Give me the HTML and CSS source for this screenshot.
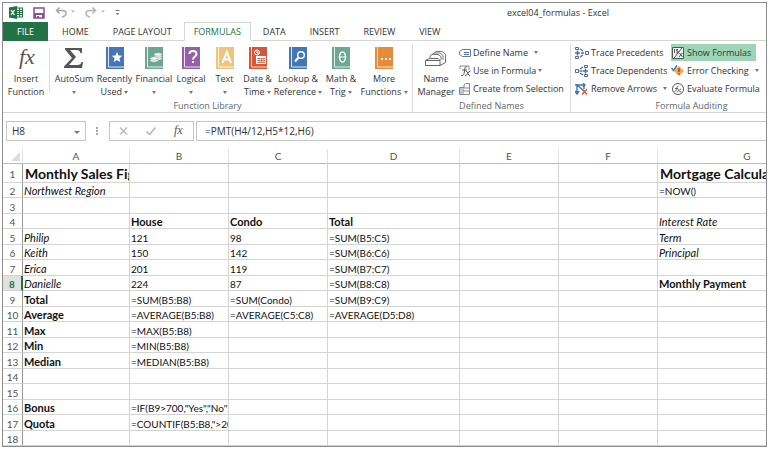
FILE: index.html
```html
<!DOCTYPE html>
<html lang="en">
<head>
    <meta charset="UTF-8">
    <meta name="viewport" content="width=device-width, initial-scale=1.0">
    <title>excel04_formulas - Excel</title>
    <link rel="stylesheet" href="styles.css">
</head>
<body>
<div class="window">

    <!-- Title bar -->
    <header class="titlebar">
        <div class="quick">
            <svg class="logo" width="14" height="13" viewBox="0 0 14 13">
                <rect x="7" y="2" width="6.500" height="9" fill="#fff" stroke="#217346"/>
                <path d="M8 4.500h5M8 6.500h5M8 8.500h5M10.500 2v9" stroke="#217346"/>
                <path d="M0 1.500L8 0v13L0 11.500z" fill="#217346"/>
                <path d="M2 4l3.500 5M5.500 4L2 9" stroke="#fff" stroke-width="1.300"/>
            </svg>
            <button class="qbtn" aria-label="Save">
                <svg width="12" height="12" viewBox="0 0 12 12">
                    <path d="M1 1h10v10H1z" fill="#fff" stroke="#80539c" stroke-width="1.500"/>
                    <path d="M1 6h10v5H9V8H3v3H1z" fill="#80539c"/>
                    <rect x="4" y="9" width="2" height="2" fill="#80539c"/>
                </svg>
            </button>
            <button class="qbtn" aria-label="Undo">
                <svg width="20" height="11" viewBox="0 0 20 11" fill="none" stroke="#a6a6a6">
                    <path d="M4.500 0.500L1.500 3.500L4.500 6.500M1.500 3.500H7C10 3.500 11 5 11 6.500S9 9.500 7 10" stroke-width="1.500"/>
                    <path d="M16 3.500h4l-2 2z" fill="#b0b0b0" stroke="none"/>
                </svg>
            </button>
            <button class="qbtn" aria-label="Redo">
                <svg width="20" height="11" viewBox="0 0 20 11" fill="none" stroke="#b4b4b4">
                    <path d="M7.500 0.500L10.500 3.500L7.500 6.500M10.500 3.500H5C2 3.500 1 5 1 6.500S3 9.500 5 10" stroke-width="1.500"/>
                    <path d="M16 3.500h4l-2 2z" fill="#b0b0b0" stroke="none"/>
                </svg>
            </button>
            <button class="qbtn" aria-label="Customize Quick Access Toolbar">
                <svg width="5" height="6" viewBox="0 0 5 6" fill="#777"><path d="M0.500 0h4v1h-4zM0.500 3h4l-2 2z"/></svg>
            </button>
        </div>
        <h1 class="title">excel04_formulas - Excel</h1>
    </header>

    <!-- Tabs -->
    <nav class="tabs">
        <button class="tab file">FILE</button>
        <button class="tab">HOME</button>
        <button class="tab">PAGE LAYOUT</button>
        <button class="tab active">FORMULAS</button>
        <button class="tab">DATA</button>
        <button class="tab">INSERT</button>
        <button class="tab">REVIEW</button>
        <button class="tab">VIEW</button>
    </nav>

    <!-- Ribbon -->
    <div class="ribbon">
        <section class="group library">
            <div class="tools">
                <button class="big insert">
                    <svg class="fx" width="22" height="22" viewBox="0 0 22 22"><text x="4" y="17" font-size="22">fx</text></svg>
                    <span>Insert<br>Function</span>
                </button>
                <span class="line"></span>
                <button class="big autosum">
                    <svg width="22" height="22" viewBox="0 0 22 22"><path d="M2 1h17v5h-1.500C17 4 16 3 14 3H7l6 7-7 8h8c3 0 4-1 4.500-3H20l-1 6H1v-1.500L9 11 2 2.500z" fill="#555"/></svg>
                    <span>AutoSum<br><i class="arrow"></i></span>
                </button>
                <button class="big recent">
                    <svg width="18" height="22" viewBox="0 0 18 22"><path d="M0 0h18v22H0z" fill="#4577b6"/><path d="M2.500 0v20H18" stroke="#dfe8f3" fill="none"/><path d="M11 5l1.500 3.500 3.800.3-2.900 2.500.9 3.700-3.300-2-3.300 2 .9-3.700-2.900-2.500 3.800-.3z" fill="#fff"/></svg>
                    <span>Recently<br>Used <i class="arrow"></i></span>
                </button>
                <button class="big financial">
                    <svg width="18" height="22" viewBox="0 0 18 22"><path d="M0 0h18v22H0z" fill="#6fa593"/><path d="M2.500 0v20H18" stroke="#e3efeb" fill="none"/><g fill="#fff" stroke="#6fa593" stroke-width=".6"><ellipse cx="13" cy="11.500" rx="3.800" ry="1.700"/><ellipse cx="13" cy="9.500" rx="3.800" ry="1.700"/><ellipse cx="13" cy="7.500" rx="3.800" ry="1.700"/><ellipse cx="9" cy="13.500" rx="3.800" ry="1.700"/><ellipse cx="9" cy="11.500" rx="3.800" ry="1.700"/></g></svg>
                    <span>Financial<br><i class="arrow"></i></span>
                </button>
                <button class="big logical">
                    <svg width="18" height="22" viewBox="0 0 18 22"><path d="M0 0h18v22H0z" fill="#9560a8"/><path d="M2.500 0v20H18" stroke="#eadff0" fill="none"/><path d="M7.500 7c0-4 7-4 7 0 0 2.500-3.500 2.500-3.500 5.500" stroke="#fff" stroke-width="2" fill="none"/><path d="M10 14h2v2h-2z" fill="#fff"/></svg>
                    <span>Logical<br><i class="arrow"></i></span>
                </button>
                <button class="big text">
                    <svg width="18" height="22" viewBox="0 0 18 22"><path d="M0 0h18v22H0z" fill="#eec57a"/><path d="M2.500 0v20H18" stroke="#fbf1df" fill="none"/><path d="M6.500 16L10.800 5 15 16M8 12.500h6" stroke="#fff" stroke-width="2" fill="none"/></svg>
                    <span>Text<br><i class="arrow"></i></span>
                </button>
                <button class="big date">
                    <svg width="18" height="22" viewBox="0 0 18 22"><path d="M0 0h18v22H0z" fill="#d4573a"/><path d="M2.500 0v20H18" stroke="#f6dcd5" fill="none"/><circle cx="8" cy="5.500" r="2.500" fill="none" stroke="#fff"/><path d="M8 4v2h2" stroke="#fff" fill="none"/><path d="M7 9h10v8H7z" fill="#fff"/><path d="M8 11.500h8M8 13.500h8M8 15.500h8M10 11v5M12.500 11v5M15 11v5" stroke="#d4573a" stroke-width=".7"/></svg>
                    <span>Date &amp;<br>Time <i class="arrow"></i></span>
                </button>
                <button class="big lookup">
                    <svg width="18" height="22" viewBox="0 0 18 22"><path d="M0 0h18v22H0z" fill="#4577b6"/><path d="M2.500 0v20H18" stroke="#dfe8f3" fill="none"/><circle cx="12" cy="8" r="3.300" fill="none" stroke="#fff" stroke-width="1.400"/><path d="M9.500 10.500L6 14.500" stroke="#fff" stroke-width="2"/></svg>
                    <span>Lookup &amp;<br>Reference <i class="arrow"></i></span>
                </button>
                <button class="big math">
                    <svg width="18" height="22" viewBox="0 0 18 22"><path d="M0 0h18v22H0z" fill="#6fa593"/><path d="M2.500 0v20H18" stroke="#e3efeb" fill="none"/><ellipse cx="10.500" cy="10" rx="3" ry="5" fill="none" stroke="#fff" stroke-width="1.500"/><path d="M8 10h5" stroke="#fff"/></svg>
                    <span>Math &amp;<br>Trig <i class="arrow"></i></span>
                </button>
                <button class="big more">
                    <svg width="18" height="22" viewBox="0 0 18 22"><path d="M0 0h18v22H0z" fill="#e68a3c"/><path d="M2.500 0v20H18" stroke="#fae6d5" fill="none"/><path d="M6 11h2v2H6zM10 11h2v2h-2zM14 11h2v2h-2z" fill="#fff"/></svg>
                    <span>More<br>Functions <i class="arrow"></i></span>
                </button>
            </div>
            <h2 class="caption">Function Library</h2>
        </section>

        <section class="group names">
            <div class="tools">
                <button class="big manager">
                    <svg width="22" height="22" viewBox="0 0 22 22" fill="#fff" stroke="#777">
                        <path d="M9 10V6l2-1.500h6L20.500 7.500V14"/>
                        <path d="M7 11V7.500L9 6h6l3 2.500V13"/>
                        <path d="M5 12V9l2-1.500h6l3 2V13"/>
                        <path d="M.5 13.500L4.500 11.500H13l2 2v5H.5zM.5 13.500H15M15 18.500l5.500-3v-4" stroke="#666"/>
                    </svg>
                    <span>Name<br>Manager</span>
                </button>
                <div class="stack">
                    <button class="small">
                        <svg width="12" height="12" viewBox="0 0 12 12" fill="none"><path d="M3.500 2.500h8v7h-8L.5 7.500v-3z" stroke="#777"/><path d="M5 5.500h5M5 7.500h5" stroke="#4577b6"/></svg>
                        Define Name <i class="arrow far"></i>
                    </button>
                    <button class="small">
                        <svg width="12" height="12" viewBox="0 0 12 12" fill="none" stroke="#555"><path d="M1 4V1h9v4" stroke="#888"/><path d="M8 2C6 1 6 3 5.500 6S5 11 2 10.500M3 5h5M7 6c2 0 2 5 4 5M11.500 6C9 6 8 11 6 11"/></svg>
                        Use in Formula<i class="arrow"></i>
                    </button>
                    <button class="small">
                        <svg width="12" height="12" viewBox="0 0 12 12" fill="#fff" stroke="#888"><path d="M0.500 4.500h10v7h-10zM0.500 8h10M4 4.500v7"/><path d="M1 5h3v6H1z" fill="#b8cbe2" stroke="none"/><path d="M5 5V2l1.500-1.500h4V5z"/></svg>
                        Create from Selection
                    </button>
                </div>
            </div>
            <h2 class="caption">Defined Names</h2>
        </section>

        <section class="group auditing">
            <div class="tools">
                <div class="stack trace">
                    <button class="small">
                        <svg width="14" height="12" viewBox="0 0 14 12" fill="none"><path d="M.5.500h3v2h-3zM.5 9.500h3v2h-3zM10.500 4.500h3v3h-3z" stroke="#666"/><path d="M0 6h5M2.500 3.500v5M5 2l3 2M5 10l3-2M6 6h3" stroke="#3f74b5" stroke-width="1.500"/></svg>
                        Trace Precedents
                    </button>
                    <button class="small">
                        <svg width="14" height="12" viewBox="0 0 14 12" fill="none"><path d="M.5 4.500h3v3h-3zM9.500.500h3v2h-3zM9.500 9.500h3v2h-3z" stroke="#666"/><path d="M8 6h5M10.500 3.500v5M8 2L5 4M8 10L5 8M4.500 6h3" stroke="#3f74b5" stroke-width="1.500"/></svg>
                        Trace Dependents
                    </button>
                    <button class="small">
                        <svg width="14" height="12" viewBox="0 0 14 12" fill="none"><path d="M2 1v9M0 8l2 3 2-3M2 2l7 6M2 2h8M8 0l2 2-2 2M0 2h4M9 2v4" stroke="#3f74b5" stroke-width="1.400"/><path d="M7 6l5 5.500M12 6l-5 5.500" stroke="#d9573a" stroke-width="1.400"/></svg>
                        Remove Arrows <i class="arrow far"></i>
                    </button>
                </div>
                <div class="stack">
                    <button class="small pressed">
                        <svg width="14" height="12" viewBox="0 0 14 12" fill="none" stroke="#555"><path d="M1.500.500h11v11h-11z" fill="#eef6f1"/><path d="M3.500 2v4M7 2.500H5.500v1.500H7v2H5M11 1L3 11M8.500 6l3 4M11.500 6L8 10"/></svg>
                        Show Formulas
                    </button>
                    <button class="small">
                        <svg width="14" height="12" viewBox="0 0 14 12" fill="none"><path d="M8 1l5 5-5 5-5-5z" fill="#f0a848"/><path d="M8 3v4M8 8v1.500" stroke="#c0392b" stroke-width="1.500"/><path d="M.5 3L2.500 5.500 6 .5" stroke="#3f74b5" stroke-width="1.500"/></svg>
                        Error Checking <i class="arrow far"></i>
                    </button>
                    <button class="small">
                        <svg width="14" height="12" viewBox="0 0 14 12" fill="none" stroke="#555"><circle cx="7" cy="6" r="5.500"/><path d="M7.500 3C5.500 2.500 6 9 3.500 8.500M4 5.500h3M6.500 6c1.500 0 1.500 3 3.500 3M10 6C8.500 6 7.500 9 6 9" stroke-width=".9"/></svg>
                        Evaluate Formula
                    </button>
                </div>
            </div>
            <h2 class="caption">Formula Auditing</h2>
        </section>
    </div>

    <!-- Formula bar -->
    <div class="formulabar">
        <div class="namebox">
            <input type="text" value="H8" aria-label="Name Box">
            <button aria-label="Open name list"><i class="arrow"></i></button>
        </div>
        <svg class="grip" width="3" height="9" viewBox="0 0 3 9" fill="#aaa"><path d="M0 0h2v2H0zM0 3h2v2H0zM0 6h2v2H0z"/></svg>
        <div class="entry">
            <button aria-label="Cancel"><svg width="9" height="8" viewBox="0 0 9 8"><path d="M1 .5l7 7M8 .5l-7 7" stroke="#bbb" stroke-width="1.500"/></svg></button>
            <button aria-label="Enter"><svg width="10" height="8" viewBox="0 0 10 8" fill="none"><path d="M.5 4.500L3.500 7.500 9.500.500" stroke="#bbb" stroke-width="1.700"/></svg></button>
            <button aria-label="Insert Function"><svg class="fx" width="11" height="12" viewBox="0 0 11 12"><text x="1" y="9" font-size="12">fx</text></svg></button>
        </div>
        <input class="formula" type="text" value="=PMT(H4/12,H5*12,H6)" aria-label="Formula Bar">
    </div>

    <!-- Sheet -->
    <div class="sheet">
        <table class="grid">
            <colgroup>
                <col class="c-num"><col class="c-a"><col class="c-std"><col class="c-std"><col class="c-d"><col class="c-std"><col class="c-std"><col class="c-g">
            </colgroup>
            <thead>
                <tr><th class="corner"><svg width="9" height="9" viewBox="0 0 9 9"><path d="M9 0v9H0z" fill="#dcdcdc"/></svg></th><th>A</th><th>B</th><th>C</th><th>D</th><th>E</th><th>F</th><th>G</th></tr>
            </thead>
            <tbody>
                <tr class="heading"><th>1</th><td>Monthly Sales Figures</td><td></td><td></td><td></td><td></td><td></td><td>Mortgage Calculator</td></tr>
                <tr><th>2</th><td class="it">Northwest Region</td><td></td><td></td><td></td><td></td><td></td><td>=NOW()</td></tr>
                <tr><th>3</th><td></td><td></td><td></td><td></td><td></td><td></td><td></td></tr>
                <tr><th>4</th><td></td><td class="bold">House</td><td class="bold">Condo</td><td class="bold">Total</td><td></td><td></td><td class="it">Interest Rate</td></tr>
                <tr><th>5</th><td class="it">Philip</td><td>121</td><td>98</td><td>=SUM(B5:C5)</td><td></td><td></td><td class="it">Term</td></tr>
                <tr><th>6</th><td class="it">Keith</td><td>150</td><td>142</td><td>=SUM(B6:C6)</td><td></td><td></td><td class="it">Principal</td></tr>
                <tr><th>7</th><td class="it">Erica</td><td>201</td><td>119</td><td>=SUM(B7:C7)</td><td></td><td></td><td></td></tr>
                <tr class="current"><th>8</th><td class="it">Danielle</td><td>224</td><td>87</td><td>=SUM(B8:C8)</td><td></td><td></td><td class="bold">Monthly Payment</td></tr>
                <tr><th>9</th><td class="bold">Total</td><td>=SUM(B5:B8)</td><td>=SUM(Condo)</td><td>=SUM(B9:C9)</td><td></td><td></td><td></td></tr>
                <tr><th>10</th><td class="bold">Average</td><td>=AVERAGE(B5:B8)</td><td>=AVERAGE(C5:C8)</td><td>=AVERAGE(D5:D8)</td><td></td><td></td><td></td></tr>
                <tr><th>11</th><td class="bold">Max</td><td>=MAX(B5:B8)</td><td></td><td></td><td></td><td></td><td></td></tr>
                <tr><th>12</th><td class="bold">Min</td><td>=MIN(B5:B8)</td><td></td><td></td><td></td><td></td><td></td></tr>
                <tr><th>13</th><td class="bold">Median</td><td>=MEDIAN(B5:B8)</td><td></td><td></td><td></td><td></td><td></td></tr>
                <tr><th>14</th><td></td><td></td><td></td><td></td><td></td><td></td><td></td></tr>
                <tr><th>15</th><td></td><td></td><td></td><td></td><td></td><td></td><td></td></tr>
                <tr><th>16</th><td class="bold">Bonus</td><td>=IF(B9&gt;700,"Yes","No")</td><td></td><td></td><td></td><td></td><td></td></tr>
                <tr><th>17</th><td class="bold">Quota</td><td>=COUNTIF(B5:B8,"&gt;200")</td><td></td><td></td><td></td><td></td><td></td></tr>
                <tr><th>18</th><td></td><td></td><td></td><td></td><td></td><td></td><td></td></tr>
            </tbody>
        </table>
    </div>
</div>
</body>
</html>
```
FILE: styles.css
```css
* {
    box-sizing: border-box;
}

body {
    margin: 0;
    padding: 2px;
    background-color: #fff;
    font-family: "Open Sans", "Noto Sans", sans-serif;
    font-size: 9px;
    color: #333;
}

button, input {
    font: inherit;
    color: inherit;
    background: none;
    border: none;
    margin: 0;
    padding: 0;
}

svg {
    display: block;
    flex: none;
}

.fx {
    overflow: visible;
    font-family: "Liberation Serif", serif;
    font-style: italic;
    fill: #555;
}

.window {
    border: 1px solid #8c8c8c;
    overflow: hidden;
}

/* down arrow used by every drop-down */
.arrow {
    display: inline-block;
    border: 2px solid transparent;
    border-top: 3px solid #777;
    border-bottom: none;
    vertical-align: middle;
}

/* Title bar */
.titlebar {
    display: flex;
    align-items: center;
    height: 19px;
}

.quick {
    display: flex;
    align-items: center;
    gap: 10px;
    flex: 1;
    padding-left: 6px;
}

.qbtn {
    display: flex;
}

.title {
    margin: 0;
    font-size: 9px;
    font-weight: normal;
}

.titlebar::after {
    content: "";
    flex: 0 0 157px;
}

/* Tabs */
.tabs {
    display: flex;
    height: 19px;
    border-bottom: 1px solid #d5d5d5;
}

.tab {
    height: 19px;
    padding: 0 12px;
    font-size: 9px;
}

.tab.file {
    width: 45px;
    margin-right: 2px;
    background-color: #217346;
    color: #fff;
}

.tab.active {
    padding: 0 9px;
    border: 1px solid #d5d5d5;
    border-bottom-color: #fff;
    color: #217346;
    background-color: #fff;
}

/* Ribbon */
.ribbon {
    display: flex;
    height: 72px;
    padding-top: 3px;
    border-bottom: 1px solid #d5d5d5;
}

.group {
    display: flex;
    flex: none;
    flex-direction: column;
    border-right: 1px solid #dcdcdc;
}

.library {
    width: 410px;
}

.names {
    width: 158px;
}

.auditing {
    width: 242px;
}

.tools {
    display: flex;
    height: 56px;
}

.caption {
    margin: 0;
    font-size: 9px;
    font-weight: normal;
    line-height: 12px;
    text-align: center;
    color: #666;
}

.big {
    display: flex;
    flex-direction: column;
    align-items: center;
    gap: 3px;
    padding-top: 3px;
    line-height: 13px;
    white-space: nowrap;
}

.big span {
    display: block;
}

.line {
    border-left: 1px solid #dcdcdc;
    height: 44px;
    margin: 4px 4px 0 0;
}

.insert { width: 46px; }
.autosum { width: 40px; }
.recent { width: 41px; }
.financial { width: 38px; }
.logical { width: 36px; }
.text { width: 31px; }
.date { width: 35px; }
.lookup { width: 46px; }
.math { width: 40px; }
.more { width: 46px; }
.manager { width: 46px; }

.stack {
    display: flex;
    flex-direction: column;
    gap: 1px;
}

.small {
    display: flex;
    align-items: center;
    gap: 2px;
    height: 17px;
    white-space: nowrap;
}

.far {
    margin-left: 4px;
}

.trace {
    width: 96px;
    margin-left: 4px;
}

.pressed {
    width: 85px;
    background-color: #9fd5b7;
}

/* Formula bar */
.formulabar {
    display: flex;
    align-items: center;
    padding: 8px 0 0 3px;
    font-size: 10px;
}

.namebox, .entry, .formula {
    height: 20px;
    border: 1px solid #c6c6c6;
}

.namebox {
    display: flex;
    align-items: center;
    width: 80px;
    padding: 0 5px;
}

.namebox input {
    flex: 1;
    min-width: 0;
}

.namebox .arrow {
    border-width: 3px 3px 0;
}

.grip {
    margin: 0 10px;
}

.entry {
    display: flex;
    align-items: center;
    justify-content: space-between;
    width: 85px;
    padding: 0 9px;
}

.formula {
    flex: 1;
    min-width: 0;
    margin-left: 2px;
    padding-left: 8px;
    border-right: none;
}

/* Sheet */
.sheet {
    padding-top: 8px;
    overflow: hidden;
}

.grid {
    width: 833px;
    table-layout: fixed;
    border-collapse: separate;
    border-spacing: 0;
    font-family: Lato, sans-serif;
    font-size: 10px;
    line-height: 12px;
    color: #111;
}

.c-num { width: 20px; }
.c-a { width: 107px; }
.c-std { width: 99px; }
.c-d { width: 132px; }
.c-g { width: 179px; }

.grid td, .grid th {
    height: 15px;
    padding: 2px 0 0 1px;
    border-right: 1px solid #d4d4d4;
    border-bottom: 1px solid #d4d4d4;
    overflow: hidden;
    white-space: nowrap;
    text-align: left;
}

.grid th {
    padding-left: 0;
    font-weight: normal;
    text-align: center;
    color: #555;
}

.grid thead th {
    padding-top: 0;
    border-right-color: #e2e2e2;
    border-bottom-color: #bbb;
}

.grid tbody th {
    border-right-color: #999;
}

.grid tbody tr:nth-child(odd) td {
    height: 16px;
}

.grid .heading td {
    height: 19px;
    padding-left: 2px;
    font-size: 14px;
    font-weight: bold;
    line-height: 16px;
}

.grid .corner {
    padding-left: 8px;
}

.grid .current th {
    border-right: 2px solid #217346;
    background-color: #e1e1e1;
    font-weight: bold;
    color: #217346;
}

.it {
    font-size: 11px;
    font-style: italic;
}

.bold {
    font-size: 11px;
    font-weight: bold;
}
```
